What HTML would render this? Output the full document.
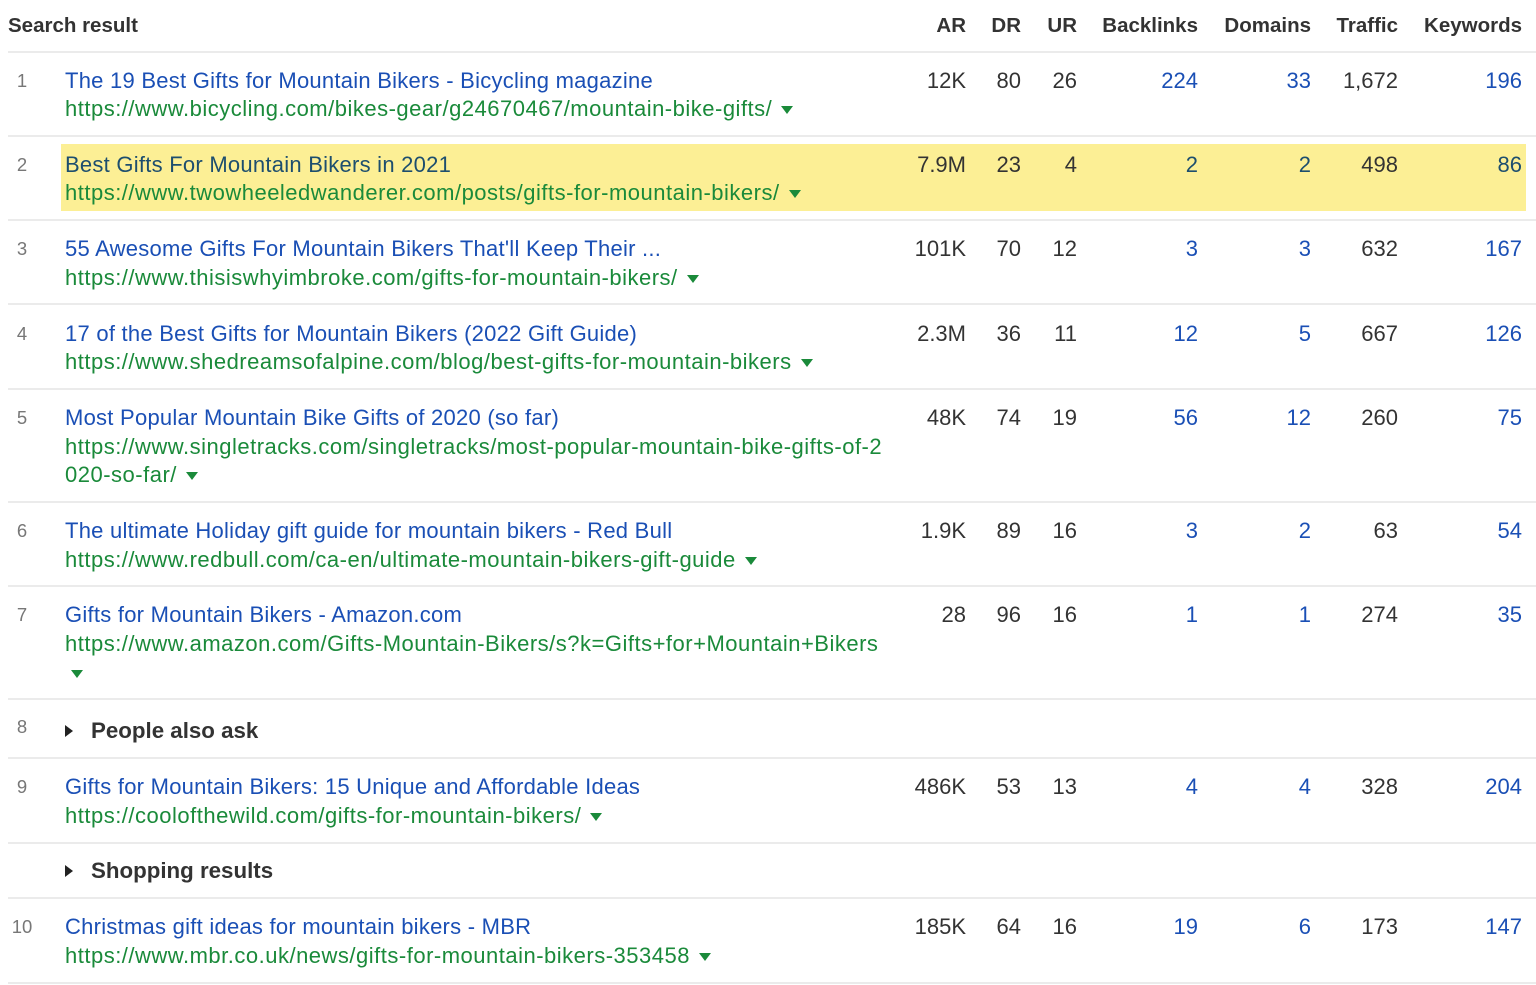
<!DOCTYPE html>
<html><head><meta charset="utf-8"><style>
body{margin:0;width:1536px;height:985px;background:#fff;font-family:"Liberation Sans",Arial,sans-serif;position:relative;overflow:hidden}
div{position:absolute;white-space:nowrap;line-height:28px}
.h{font-weight:bold;font-size:20.5px;color:#333;top:12px}
.sep{height:2px;background:#ebebeb;left:8px;width:1528px;line-height:0}
.n{left:8px;width:28px;text-align:center;font-size:18.5px;color:#777}
.t{left:65px;font-size:22px;letter-spacing:0.25px;color:#1a4fb5}
.u{left:65px;font-size:22px;letter-spacing:0.5px;color:#1a8a3a}
.u::after{content:"";display:inline-block;margin-left:9px;border-left:6px solid transparent;border-right:6px solid transparent;border-top:8px solid #1a8a3a;vertical-align:middle}
.c{font-size:22px;color:#333;text-align:right;width:120px}
.b{color:#1a4fb5}
.g{left:65px;font-size:22.3px;font-weight:bold;color:#333}
.g::before{content:"";display:inline-block;border-top:6px solid transparent;border-bottom:6px solid transparent;border-left:8px solid #222;margin-right:18px;vertical-align:1px}
.hl{left:61px;top:144px;width:1465px;height:67px;background:#fcef95}
</style></head><body>
<div class="h" style="left:8px">Search result</div>
<div class="h" style="right:570px">AR</div>
<div class="h" style="right:515px">DR</div>
<div class="h" style="right:459px">UR</div>
<div class="h" style="right:338px">Backlinks</div>
<div class="h" style="right:225px">Domains</div>
<div class="h" style="right:138px">Traffic</div>
<div class="h" style="right:14px">Keywords</div>

<div class="hl"></div>
<div class="sep" style="top:51px"></div>
<div class="sep" style="top:135px"></div>
<div class="sep" style="top:219px"></div>
<div class="sep" style="top:303px"></div>
<div class="sep" style="top:388px"></div>
<div class="sep" style="top:501px"></div>
<div class="sep" style="top:585px"></div>
<div class="sep" style="top:698px"></div>
<div class="sep" style="top:757px"></div>
<div class="sep" style="top:842px"></div>
<div class="sep" style="top:897px"></div>
<div class="sep" style="top:982px"></div>

<div class="n" style="top:67px">1</div>
<div class="t" style="top:67px">The 19 Best Gifts for Mountain Bikers - Bicycling magazine</div>
<div class="u" style="top:95px">https://www.bicycling.com/bikes-gear/g24670467/mountain-bike-gifts/</div>

<div class="n" style="top:151px">2</div>
<div class="t" style="top:151px;color:#1d4e6e">Best Gifts For Mountain Bikers in 2021</div>
<div class="u" style="top:179px">https://www.twowheeledwanderer.com/posts/gifts-for-mountain-bikers/</div>

<div class="n" style="top:235px">3</div>
<div class="t" style="top:235px">55 Awesome Gifts For Mountain Bikers That'll Keep Their ...</div>
<div class="u" style="top:264px">https://www.thisiswhyimbroke.com/gifts-for-mountain-bikers/</div>

<div class="n" style="top:320px">4</div>
<div class="t" style="top:320px">17 of the Best Gifts for Mountain Bikers (2022 Gift Guide)</div>
<div class="u" style="top:348px">https://www.shedreamsofalpine.com/blog/best-gifts-for-mountain-bikers</div>

<div class="n" style="top:404px">5</div>
<div class="t" style="top:404px">Most Popular Mountain Bike Gifts of 2020 (so far)</div>
<div style="left:65px;top:433px;font-size:22px;letter-spacing:0.5px;color:#1a8a3a">https://www.singletracks.com/singletracks/most-popular-mountain-bike-gifts-of-2</div>
<div class="u" style="top:461px">020-so-far/</div>

<div class="n" style="top:517px">6</div>
<div class="t" style="top:517px">The ultimate Holiday gift guide for mountain bikers - Red Bull</div>
<div class="u" style="top:546px">https://www.redbull.com/ca-en/ultimate-mountain-bikers-gift-guide</div>

<div class="n" style="top:601px">7</div>
<div class="t" style="top:601px">Gifts for Mountain Bikers - Amazon.com</div>
<div style="left:65px;top:630px;font-size:22px;letter-spacing:0.5px;color:#1a8a3a">https://www.amazon.com/Gifts-Mountain-Bikers/s?k=Gifts+for+Mountain+Bikers</div>
<div style="left:71px;top:670px;width:0;height:0;border-left:6px solid transparent;border-right:6px solid transparent;border-top:8px solid #1a8a3a;line-height:0"></div>

<div class="n" style="top:713px">8</div>
<div class="g" style="top:717px">People also ask</div>

<div class="n" style="top:773px">9</div>
<div class="t" style="top:773px">Gifts for Mountain Bikers: 15 Unique and Affordable Ideas</div>
<div class="u" style="top:802px">https://coolofthewild.com/gifts-for-mountain-bikers/</div>

<div class="g" style="top:857px">Shopping results</div>

<div class="n" style="top:913px">10</div>
<div class="t" style="top:913px">Christmas gift ideas for mountain bikers - MBR</div>
<div class="u" style="top:942px">https://www.mbr.co.uk/news/gifts-for-mountain-bikers-353458</div>

<div class="c" style="top:67px;left:846px">12K</div><div class="c" style="top:67px;left:901px">80</div><div class="c" style="top:67px;left:957px">26</div><div class="c b" style="top:67px;left:1078px">224</div><div class="c b" style="top:67px;left:1191px">33</div><div class="c" style="top:67px;left:1278px">1,672</div><div class="c b" style="top:67px;left:1402px">196</div>

<div class="c" style="top:151px;left:846px">7.9M</div><div class="c" style="top:151px;left:901px">23</div><div class="c" style="top:151px;left:957px">4</div><div class="c" style="top:151px;left:1078px;color:#1d4e6e">2</div><div class="c" style="top:151px;left:1191px;color:#1d4e6e">2</div><div class="c" style="top:151px;left:1278px">498</div><div class="c" style="top:151px;left:1402px;color:#1d4e6e">86</div>

<div class="c" style="top:235px;left:846px">101K</div><div class="c" style="top:235px;left:901px">70</div><div class="c" style="top:235px;left:957px">12</div><div class="c b" style="top:235px;left:1078px">3</div><div class="c b" style="top:235px;left:1191px">3</div><div class="c" style="top:235px;left:1278px">632</div><div class="c b" style="top:235px;left:1402px">167</div>

<div class="c" style="top:320px;left:846px">2.3M</div><div class="c" style="top:320px;left:901px">36</div><div class="c" style="top:320px;left:957px">11</div><div class="c b" style="top:320px;left:1078px">12</div><div class="c b" style="top:320px;left:1191px">5</div><div class="c" style="top:320px;left:1278px">667</div><div class="c b" style="top:320px;left:1402px">126</div>

<div class="c" style="top:404px;left:846px">48K</div><div class="c" style="top:404px;left:901px">74</div><div class="c" style="top:404px;left:957px">19</div><div class="c b" style="top:404px;left:1078px">56</div><div class="c b" style="top:404px;left:1191px">12</div><div class="c" style="top:404px;left:1278px">260</div><div class="c b" style="top:404px;left:1402px">75</div>

<div class="c" style="top:517px;left:846px">1.9K</div><div class="c" style="top:517px;left:901px">89</div><div class="c" style="top:517px;left:957px">16</div><div class="c b" style="top:517px;left:1078px">3</div><div class="c b" style="top:517px;left:1191px">2</div><div class="c" style="top:517px;left:1278px">63</div><div class="c b" style="top:517px;left:1402px">54</div>

<div class="c" style="top:601px;left:846px">28</div><div class="c" style="top:601px;left:901px">96</div><div class="c" style="top:601px;left:957px">16</div><div class="c b" style="top:601px;left:1078px">1</div><div class="c b" style="top:601px;left:1191px">1</div><div class="c" style="top:601px;left:1278px">274</div><div class="c b" style="top:601px;left:1402px">35</div>

<div class="c" style="top:773px;left:846px">486K</div><div class="c" style="top:773px;left:901px">53</div><div class="c" style="top:773px;left:957px">13</div><div class="c b" style="top:773px;left:1078px">4</div><div class="c b" style="top:773px;left:1191px">4</div><div class="c" style="top:773px;left:1278px">328</div><div class="c b" style="top:773px;left:1402px">204</div>

<div class="c" style="top:913px;left:846px">185K</div><div class="c" style="top:913px;left:901px">64</div><div class="c" style="top:913px;left:957px">16</div><div class="c b" style="top:913px;left:1078px">19</div><div class="c b" style="top:913px;left:1191px">6</div><div class="c" style="top:913px;left:1278px">173</div><div class="c b" style="top:913px;left:1402px">147</div>
</body></html>
